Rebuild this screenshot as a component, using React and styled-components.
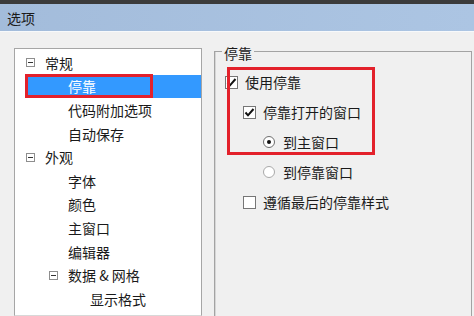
import styled, { createGlobalStyle } from "styled-components";

const GlobalStyle = createGlobalStyle`
  html, body {
    margin: 0;
    padding: 0;
    width: 474px;
    height: 316px;
    overflow: hidden;
    background: #f0f0f0;
  }
  body {
    font-family: "Noto Sans CJK SC", "Noto Sans", sans-serif;
    color: #1a1a1a;
  }
`;

const Window = styled.div`
  display: flex;
  flex-direction: column;
  height: 316px;
`;

const TopStrip = styled.div`
  height: 4px;
  background: #3b3b3b;
`;

const TitleBar = styled.div`
  height: 27px;
  display: flex;
  align-items: center;
  padding-left: 7px;
  background: linear-gradient(90deg, #a3bcdb, #acc5e3);
  border-bottom: 1px solid #f7f9fb;
  font-size: 14px;
  line-height: 16px;
  color: #1b1b1b;
`;

const Body = styled.div`
  flex: 1;
  display: flex;
  align-items: stretch;
  gap: 12px;
  padding: 9px 2px 0 14px;
  min-height: 0;
`;

const Tree = styled.ul`
  list-style: none;
  margin: 7px 0 0 0;
  padding: 2px 0 0 0;
  width: 186px;
  background: #fff;
  border: 1px solid #a6a6a6;
  border-bottom-color: #d8d8d8;
  font-size: 14px;
`;

const TreeRow = styled.li`
  position: relative;
  display: flex;
  align-items: center;
  height: 23.6px;
  line-height: 16px;
  padding-left: ${(p) => (p.$selected ? p.$indent - 10 : p.$indent)}px;
  margin-left: ${(p) => (p.$selected ? 10 : 0)}px;
  background: ${(p) => (p.$selected ? "#3399ff" : "transparent")};
  color: ${(p) => (p.$selected ? "#ffffff" : "#1a1a1a")};
`;

const Expander = styled.span`
  position: relative;
  box-sizing: border-box;
  width: 9px;
  height: 9px;
  margin-left: -19px;
  margin-right: 10px;
  border: 1px solid #8e8e8e;
  background: #fff;
  &::after {
    content: "";
    position: absolute;
    left: 1px;
    right: 1px;
    top: 3px;
    height: 1px;
    background: #333;
  }
`;

const Marker = styled.span`
  position: absolute;
  left: 0;
  top: -1px;
  width: 128px;
  height: 24px;
  box-sizing: border-box;
  border: 3px solid #e3212b;
  pointer-events: none;
`;

const GroupBox = styled.fieldset`
  margin: 0;
  padding: 0 0 0 10px;
  width: 246px;
  border: 1px solid #a3a3a3;
  border-bottom: none;
  box-shadow: inset 1px 0 0 #d6d6d6;
  min-width: 0;
`;

const GroupTitle = styled.legend`
  margin-left: -3px;
  padding: 4px 2px 0;
  font-size: 14px;
  line-height: 16px;
  color: #1a1a1a;
`;

const Options = styled.div`
  position: relative;
  padding-top: 6px;
`;

const OptionRow = styled.label`
  display: flex;
  align-items: center;
  height: 30px;
  padding-left: ${(p) => p.$indent}px;
  font-size: 14px;
  line-height: 16px;
  gap: 7px;
`;

const CheckBox = styled.span`
  box-sizing: border-box;
  width: 13px;
  height: 13px;
  border: 1px solid #767676;
  background: #fff;
  display: flex;
  align-items: center;
  justify-content: center;
`;

const Radio = styled.span`
  box-sizing: border-box;
  width: 12px;
  height: 12px;
  margin-right: 1px;
  border-radius: 50%;
  border: 1px solid ${(p) => (p.$on ? "#6e6e6e" : "#a9a9a9")};
  background: #fff;
  display: flex;
  align-items: center;
  justify-content: center;
  &::after {
    content: "";
    width: 4px;
    height: 4px;
    border-radius: 50%;
    background: ${(p) => (p.$on ? "#111" : "transparent")};
  }
`;

const OptionsMarker = styled.span`
  position: absolute;
  left: 2px;
  top: 6px;
  width: 148px;
  height: 88px;
  box-sizing: border-box;
  border: 3px solid #e3212b;
  pointer-events: none;
`;

const Check = () => (
  <svg width="11" height="11" viewBox="0 0 11 11">
    <path d="M1.5 5.5 L4 8.3 L9.5 2" fill="none" stroke="#111" strokeWidth="2" />
  </svg>
);

const treeItems = [
  { text: "常规", indent: 30, node: true },
  { text: "停靠", indent: 53, selected: true },
  { text: "代码附加选项", indent: 53 },
  { text: "自动保存", indent: 53 },
  { text: "外观", indent: 30, node: true },
  { text: "字体", indent: 53 },
  { text: "颜色", indent: 53 },
  { text: "主窗口", indent: 53 },
  { text: "编辑器", indent: 53 },
  { text: "数据 & 网格", indent: 53, node: true },
  { text: "显示格式", indent: 75 },
];

const options = [
  { text: "使用停靠", indent: 0, type: "check", on: true },
  { text: "停靠打开的窗口", indent: 18, type: "check", on: true },
  { text: "到主窗口", indent: 38, type: "radio", on: true },
  { text: "到停靠窗口", indent: 38, type: "radio", on: false },
  { text: "遵循最后的停靠样式", indent: 18, type: "check", on: false },
];

export default function App() {
  return (
    <>
      <GlobalStyle />
      <Window>
        <TopStrip />
        <TitleBar>选项</TitleBar>
        <Body>
          <Tree>
            {treeItems.map((item) => (
              <TreeRow key={item.text} $indent={item.indent} $selected={item.selected}>
                {item.node && <Expander />}
                {item.text}
                {item.selected && <Marker />}
              </TreeRow>
            ))}
          </Tree>
          <GroupBox>
            <GroupTitle>停靠</GroupTitle>
            <Options>
              {options.map((o) => (
                <OptionRow key={o.text} $indent={o.indent}>
                  {o.type === "check" ? (
                    <CheckBox>{o.on && <Check />}</CheckBox>
                  ) : (
                    <Radio $on={o.on} />
                  )}
                  {o.text}
                </OptionRow>
              ))}
              <OptionsMarker />
            </Options>
          </GroupBox>
        </Body>
      </Window>
    </>
  );
}
